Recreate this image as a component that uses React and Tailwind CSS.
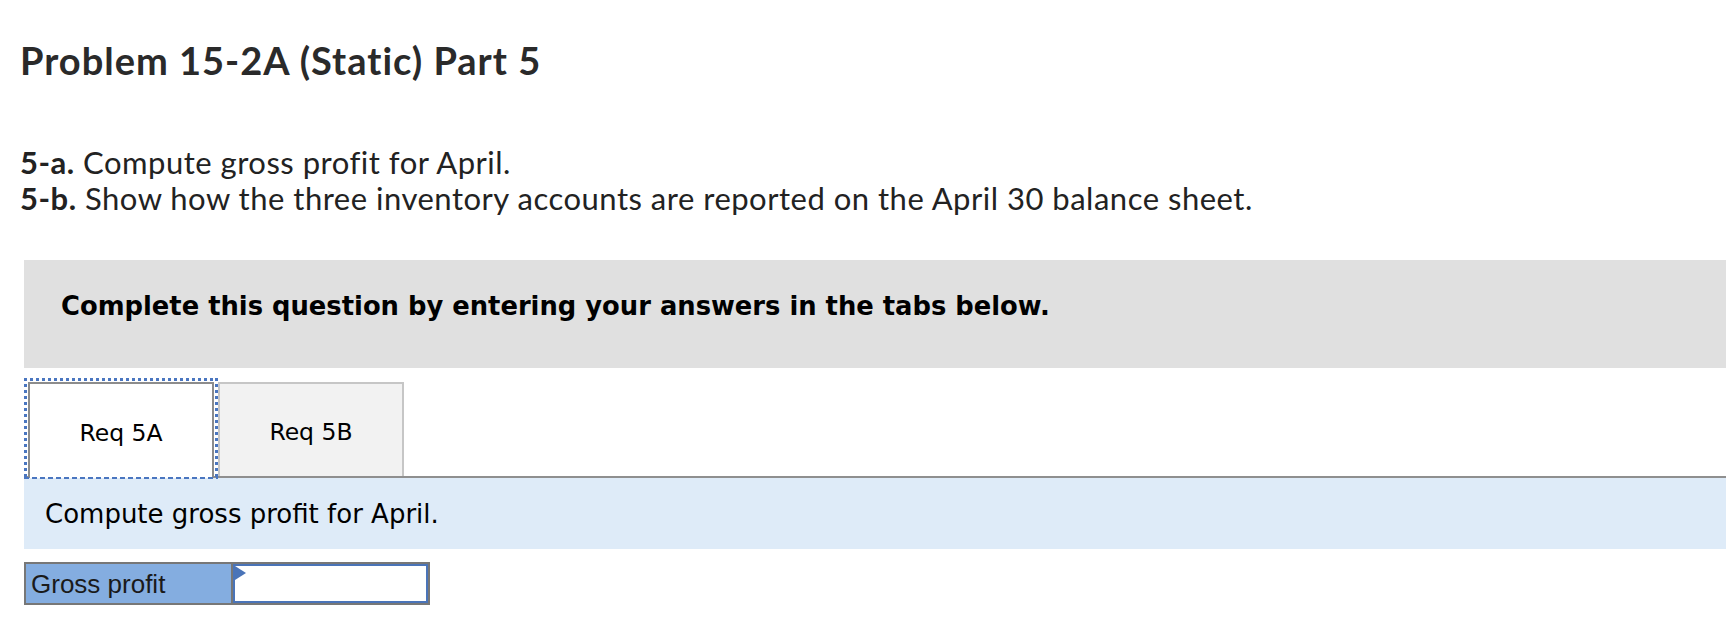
export default function App() {
  return (
    <div className="w-[1729px] min-h-[624px] overflow-hidden bg-white">
      <div className="pl-[20px] pt-[37px]">
        <h1 className="font-['Lato',sans-serif] text-[38px] font-bold leading-[46px] tracking-[1px] text-[#2a2a2a]">
          Problem 15-2A (Static) Part 5
        </h1>
        <div className="mt-[61px] font-['Lato',sans-serif] text-[31px] leading-[36px] tracking-[0.5px] text-[#222222]">
          <p>
            <span className="font-bold">5-a.</span> Compute gross profit for April.
          </p>
          <p>
            <span className="font-bold">5-b.</span> Show how the three inventory accounts are reported on the April 30 balance sheet.
          </p>
        </div>
      </div>

      <div className="ml-[24px] mt-[44px] w-[1702px]">
        <div className="h-[108px] bg-[#e0e0e0] pl-[37px] pt-[31px]">
          <p className="font-['DejaVu_Sans',sans-serif] text-[25.8px] font-bold leading-[30px] text-black">
            Complete this question by entering your answers in the tabs below.
          </p>
        </div>

        <div className="mt-[14px] flex border-b-2 border-[#8f8f8f] pl-[4px]">
          <div className="relative -mb-[2px] flex h-[96px] w-[186px] items-center justify-center border-x-2 border-t-2 border-[#8c8c8c] bg-white pt-[6px] font-['DejaVu_Sans',sans-serif] text-[23.5px] text-black">
            Req 5A
            <div className="pointer-events-none absolute -left-[6px] -top-[6px] h-[101px] w-[194px]">
              <div className="absolute left-0 top-0 h-[3px] w-full bg-[repeating-linear-gradient(90deg,#4a76c0_0px,#4a76c0_3px,transparent_3px,transparent_6px)]"></div>
              <div className="absolute bottom-0 left-0 h-[2px] w-full bg-[repeating-linear-gradient(90deg,#4a76c0_0px,#4a76c0_5px,transparent_5px,transparent_8px)]"></div>
              <div className="absolute left-0 top-0 h-full w-[3px] bg-[repeating-linear-gradient(180deg,#4a76c0_0px,#4a76c0_3px,transparent_3px,transparent_6px)]"></div>
              <div className="absolute right-0 top-0 h-full w-[3px] bg-[repeating-linear-gradient(180deg,#4a76c0_0px,#4a76c0_3px,transparent_3px,transparent_6px)]"></div>
            </div>
          </div>
          <div className="ml-[4px] flex h-[94px] w-[186px] items-center justify-center border-x-2 border-t-2 border-[#c6c6c6] bg-[#f2f2f2] pt-[6px] font-['DejaVu_Sans',sans-serif] text-[23.5px] text-black">
            Req 5B
          </div>
        </div>

        <div className="h-[71px] bg-[#deebf8] pl-[21px] pt-[21px]">
          <p className="font-['DejaVu_Sans',sans-serif] text-[26px] leading-[30px] text-black">
            Compute gross profit for April.
          </p>
        </div>

        <div className="mt-[13px] flex h-[43px] w-[406px] border-2 border-[#777777]">
          <div className="flex w-[207px] items-center border-r-2 border-[#777777] bg-[#84ade0] pl-[5px] font-['Liberation_Sans',sans-serif] text-[26px] leading-[30px] text-[#1a1a1a]">
            Gross profit
          </div>
          <div className="relative flex-1 border-2 border-[#4a74b8] bg-white">
            <div className="absolute left-0 top-0 h-0 w-0 border-y-[7px] border-l-[11px] border-y-transparent border-l-[#4a74b8]"></div>
          </div>
        </div>
      </div>
    </div>
  );
}
